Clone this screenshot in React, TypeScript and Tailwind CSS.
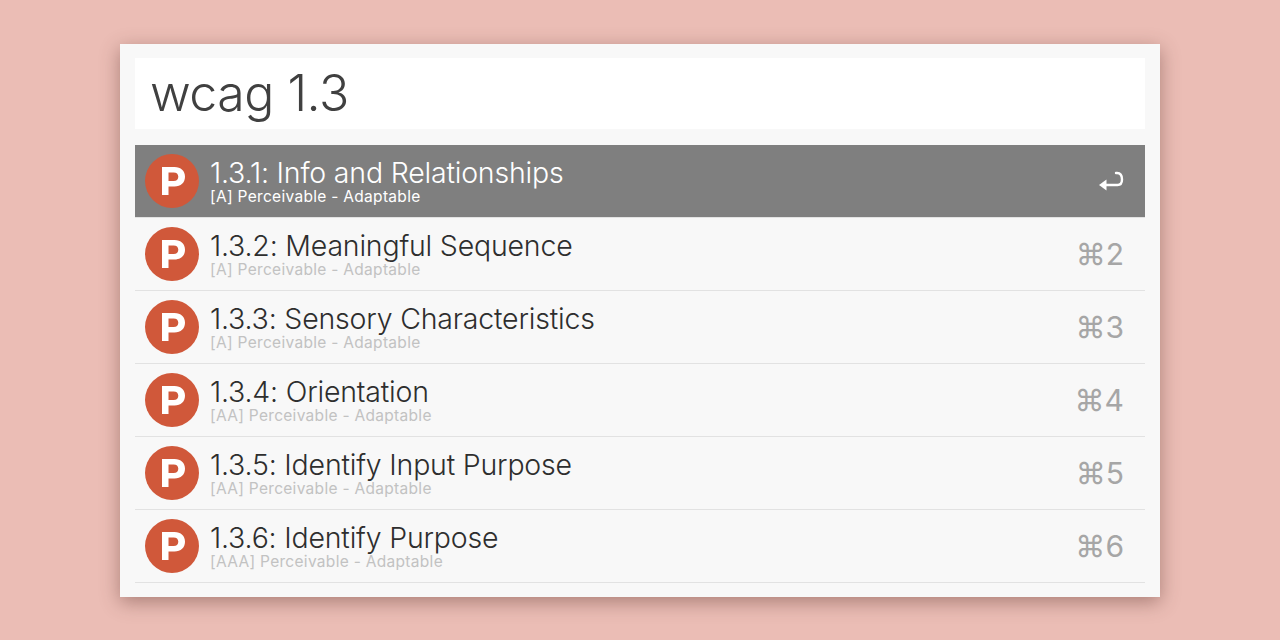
import React from "react";

interface Result {
  title: string;
  level: string;
  shortcut: string;
}

const results: Result[] = [
  { title: "1.3.1: Info and Relationships", level: "A", shortcut: "↩" },
  { title: "1.3.2: Meaningful Sequence", level: "A", shortcut: "⌘2" },
  { title: "1.3.3: Sensory Characteristics", level: "A", shortcut: "⌘3" },
  { title: "1.3.4: Orientation", level: "AA", shortcut: "⌘4" },
  { title: "1.3.5: Identify Input Purpose", level: "AA", shortcut: "⌘5" },
  { title: "1.3.6: Identify Purpose", level: "AAA", shortcut: "⌘6" },
];

const Logo = () => (
  <svg width="54" height="54" viewBox="0 0 54 54" className="shrink-0">
    <circle cx="27" cy="27" r="27" fill="#d0583a" />
    <path
      fillRule="evenodd"
      fill="#fff"
      d="M17 13h12.5c6.4 0 10.5 3.9 10.5 9.7 0 5.900-4.100 9.800-10.500 9.800H23.500V41H17V13zM23.500 18.500v8.500h5.200c2.800 0 4.600-1.600 4.600-4.300 0-2.600-1.800-4.200-4.600-4.200h-5.200z"
    />
  </svg>
);

const ReturnIcon = () => (
  <svg width="26" height="22" viewBox="0 0 26 22" fill="none">
    <path
      d="M6 15h13.500c3 0 4.500-2 4.500-5.500S22.500 3 19 3h-1"
      stroke="#fff"
      strokeWidth="2.400"
      strokeLinecap="round"
    />
    <path d="M1 15l7.500-5.500v11L1 15z" fill="#fff" />
  </svg>
);

const Row = ({ item, selected }: { item: Result; selected: boolean }) => (
  <div
    className={`flex h-[73px] items-center border-b border-[#e2e2e2] pl-[10px] pr-[21px] ${
      selected ? "bg-[#7f7f7f]" : ""
    }`}
  >
    <Logo />
    <div className="ml-[11px] min-w-0 flex-1">
      <div
        className={`text-[28.500px] leading-[30px] font-light tracking-[-0.2px] ${
          selected ? "text-white" : "text-[#2e2e2e]"
        }`}
      >
        {item.title}
      </div>
      <div
        className={`text-[15.500px] leading-[17px] tracking-[0.3px] ${
          selected ? "text-white" : "text-[#c2c2c2]"
        }`}
      >
        [{item.level}] Perceivable - Adaptable
      </div>
    </div>
    {selected ? (
      <ReturnIcon />
    ) : (
      <span className="text-[30px] leading-none text-[#a6a6a6]">{item.shortcut}</span>
    )}
  </div>
);

export default function App() {
  return (
    <div
      className="flex h-screen items-start justify-center bg-[#ebbdb5] pt-[44px]"
      style={{ fontFamily: '"Inter", "DejaVu Sans", sans-serif' }}
    >
      <div className="h-[553px] w-[1040px] bg-[#f8f8f8] px-[15px] pt-[14px] shadow-[0_5px_18px_rgba(90,50,45,0.45)]">
        <div className="flex h-[71px] items-center bg-white pl-[15px] text-[50px] font-light tracking-[-0.5px] text-[#404040]">
          wcag 1.3
        </div>
        <div className="mt-[16px]">
          {results.map((item, i) => (
            <Row key={item.title} item={item} selected={i === 0} />
          ))}
        </div>
      </div>
    </div>
  );
}
